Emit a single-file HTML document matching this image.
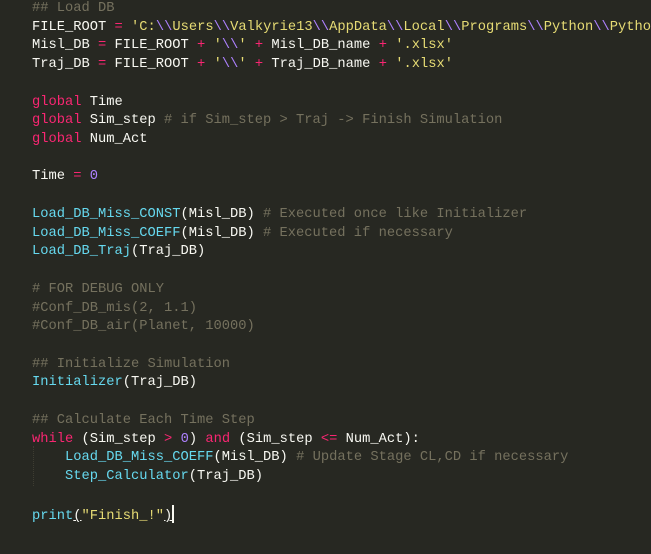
<!DOCTYPE html>
<html><head><meta charset="utf-8"><style>
html,body{margin:0;padding:0;background:#272822;width:651px;height:554px;overflow:hidden;position:relative}
pre{margin:0;position:absolute;left:32px;top:0px;width:619px;overflow:hidden;font-family:"Liberation Mono",monospace;font-size:13.75px;line-height:18.72px;color:#f8f8f2;white-space:pre}
.c{color:#75715e}.s{color:#e6db74}.k{color:#f92672}.f{color:#66d9ef}.n{color:#ae81ff}.e{color:#ae81ff}
.u{text-decoration:underline}
.cur{display:inline-block;width:2px;height:18px;background:#f8f8f0;vertical-align:-4px}
.guide{position:absolute;left:33px;top:446px;width:0;height:40px;border-left:1px dotted #3e3d32}
</style></head><body>
<div class="guide"></div>
<pre><span class="c">## Load DB</span>
FILE_ROOT <span class="k">=</span> <span class="s">'C:<span class="e">\\</span>Users<span class="e">\\</span>Valkyrie13<span class="e">\\</span>AppData<span class="e">\\</span>Local<span class="e">\\</span>Programs<span class="e">\\</span>Python<span class="e">\\</span>Pytho</span>
Misl_DB <span class="k">=</span> FILE_ROOT <span class="k">+</span> <span class="s">'<span class="e">\\</span>'</span> <span class="k">+</span> Misl_DB_name <span class="k">+</span> <span class="s">'.xlsx'</span>
Traj_DB <span class="k">=</span> FILE_ROOT <span class="k">+</span> <span class="s">'<span class="e">\\</span>'</span> <span class="k">+</span> Traj_DB_name <span class="k">+</span> <span class="s">'.xlsx'</span>

<span class="k">global</span> Time
<span class="k">global</span> Sim_step <span class="c"># if Sim_step &gt; Traj -&gt; Finish Simulation</span>
<span class="k">global</span> Num_Act

Time <span class="k">=</span> <span class="n">0</span>

<span class="f">Load_DB_Miss_CONST</span>(Misl_DB) <span class="c"># Executed once like Initializer</span>
<span class="f">Load_DB_Miss_COEFF</span>(Misl_DB) <span class="c"># Executed if necessary</span>
<span class="f">Load_DB_Traj</span>(Traj_DB)

<span class="c"># FOR DEBUG ONLY</span>
<span class="c">#Conf_DB_mis(2, 1.1)</span>
<span class="c">#Conf_DB_air(Planet, 10000)</span>

<span class="c">## Initialize Simulation</span>
<span class="f">Initializer</span>(Traj_DB)

<span class="c">## Calculate Each Time Step</span>
<span class="k">while</span> (Sim_step <span class="k">&gt;</span> <span class="n">0</span>) <span class="k">and</span> (Sim_step <span class="k">&lt;=</span> Num_Act):
    <span class="f">Load_DB_Miss_COEFF</span>(Misl_DB) <span class="c"># Update Stage CL,CD if necessary</span>
    <span class="f">Step_Calculator</span>(Traj_DB)

<span class="f">print</span><span class="u">(</span><span class="s">"Finish_!"</span><span class="u">)</span><span class="cur"></span></pre>
</body></html>
